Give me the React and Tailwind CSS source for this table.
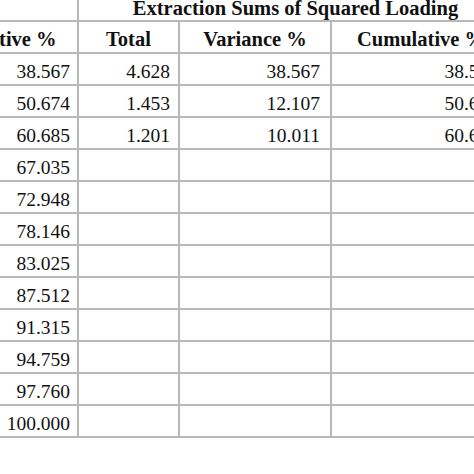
export default function App() {
  const rows = [
    ["38.567", "4.628", "38.567", "38.567"],
    ["50.674", "1.453", "12.107", "50.674"],
    ["60.685", "1.201", "10.011", "60.685"],
    ["67.035", "", "", ""],
    ["72.948", "", "", ""],
    ["78.146", "", "", ""],
    ["83.025", "", "", ""],
    ["87.512", "", "", ""],
    ["91.315", "", "", ""],
    ["94.759", "", "", ""],
    ["97.760", "", "", ""],
    ["100.000", "", "", ""],
  ];

  const cell = "h-[32px] flex items-center border-b-2 border-r-2 border-[#b8b8b8] pt-[5px]";

  return (
    <div className="w-[474px] h-[474px] overflow-hidden bg-white text-[#111] font-['Liberation_Serif',serif] text-[19.5px]">
      <div className="w-[612px] -ml-[100px] -mt-[10px]">
        {/* Header row 1 */}
        <div className="flex">
          <div className={`${cell} w-[179px]`} />
          <div className="h-[32px] flex-1 flex items-center justify-center border-b-2 border-[#b8b8b8] pt-[6px] font-bold text-[20.5px]">
            Extraction Sums of Squared Loading
          </div>
        </div>
        {/* Header row 2 */}
        <div className="flex font-bold text-[20.5px]">
          <div className={`${cell} w-[179px] justify-center pl-[8px]`}>Cumulative %</div>
          <div className={`${cell} w-[101px] justify-center`}>Total</div>
          <div className={`${cell} w-[152px] justify-center`}>Variance %</div>
          <div className={`${cell} w-[180px] justify-center border-r-0`}>Cumulative %</div>
        </div>
        {rows.map((r, i) => (
          <div key={i} className="flex">
            <div className={`${cell} w-[179px] justify-end pr-[7px]`}>{r[0]}</div>
            <div className={`${cell} w-[101px] justify-end pr-[8px]`}>{r[1]}</div>
            <div className={`${cell} w-[152px] justify-end pr-[10px]`}>{r[2]}</div>
            <div className={`${cell} w-[180px] justify-end pr-[12px] border-r-0`}>{r[3]}</div>
          </div>
        ))}
      </div>
    </div>
  );
}
